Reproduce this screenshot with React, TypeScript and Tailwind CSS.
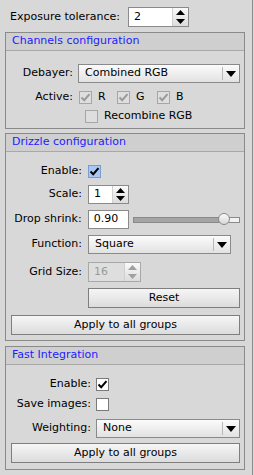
import React from 'react'

type CheckVariant = 'disabledOn' | 'disabledOff' | 'focusOn' | 'on' | 'off'

function CheckBox({ variant }: { variant: CheckVariant }) {
  const box =
    variant === 'disabledOn' || variant === 'disabledOff'
      ? 'bg-[#dedede] border-[#a6a6a6]'
      : variant === 'focusOn'
        ? 'bg-[#a8c8f4] border-[#7a9cd0]'
        : 'bg-white border-[#7a7a7a]'
  const stroke = variant === 'disabledOn' ? '#9a9a9a' : '#000000'
  const checked = variant === 'disabledOn' || variant === 'focusOn' || variant === 'on'
  return (
    <div className={`w-[13px] h-[13px] border shrink-0 flex items-center justify-center ${box}`}>
      {checked && (
        <svg width="11" height="11" viewBox="0 0 11 11">
          <path d="M1.5 5.5 L4.2 8.2 L9.5 2.2" fill="none" stroke={stroke} strokeWidth="2" />
        </svg>
      )}
    </div>
  )
}

function SpinArrows({ disabled }: { disabled?: boolean }) {
  const fill = disabled ? '#a0a0a0' : '#000000'
  return (
    <div className="w-[16px] h-full flex flex-col bg-gradient-to-b from-[#fafafa] to-[#dcdcdc] border-l border-[#d0d0d0]">
      <div className="flex-1 flex items-center justify-center">
        <svg width="9" height="5" viewBox="0 0 9 5">
          <path d="M0 5 L4.5 0 L9 5 Z" fill={fill} />
        </svg>
      </div>
      <div className="flex-1 flex items-center justify-center">
        <svg width="9" height="5" viewBox="0 0 9 5">
          <path d="M0 0 L4.5 5 L9 0 Z" fill={fill} />
        </svg>
      </div>
    </div>
  )
}

function SpinBox({ value, width, height, disabled }: { value: string; width: string; height: string; disabled?: boolean }) {
  return (
    <div
      className={`flex border ${disabled ? 'border-[#a8a8a8] bg-[#dedede] text-[#9a9a9a]' : 'border-[#8a8a8a] bg-white'} ${width} ${height}`}
    >
      <div className="flex-1 flex items-center pl-[5px]">{value}</div>
      <SpinArrows disabled={disabled} />
    </div>
  )
}

function Combo({ value, width }: { value: string; width: string }) {
  return (
    <div className={`flex h-[19px] border border-[#8a8a8a] bg-gradient-to-b from-[#fbfbfb] to-[#e2e2e2] ${width}`}>
      <div className="flex-1 flex items-center pl-[6px]">{value}</div>
      <div className="w-[17px] flex items-center justify-center border-l border-[#b8b8b8] my-[2px]">
        <svg width="10" height="6" viewBox="0 0 10 6">
          <path d="M0 0 L5 6 L10 0 Z" fill="#000" />
        </svg>
      </div>
    </div>
  )
}

function Button({ label, width }: { label: string; width: string }) {
  return (
    <div
      className={`h-[20px] flex items-center justify-center border border-[#7e7e7e] bg-gradient-to-b from-[#f6f6f6] to-[#dcdcdc] ${width}`}
    >
      {label}
    </div>
  )
}

function GroupHeader({ title }: { title: string }) {
  return (
    <div className="h-[18px] bg-[#cfcfcf] border-b border-[#a8a8a8] pl-[6px] flex items-center text-[#1c1cff]">
      {title}
    </div>
  )
}

export default function App() {
  return (
    <div className="w-[254px] h-[475px] bg-[#d8d8d8] font-['DejaVu_Sans',sans-serif] text-[11px] text-black overflow-hidden">
      <div className="w-[253px] h-full border-r border-[#8c8c8c] flex flex-col">
        {/* Exposure tolerance */}
        <div className="flex items-center pl-[10px] mt-[7px] h-[20px]">
          <div className="w-[118px]">Exposure tolerance:</div>
          <SpinBox value="2" width="w-[61px]" height="h-[20px]" />
        </div>

        {/* Channels configuration */}
        <div className="ml-[5px] mt-[5px] w-[240px] border border-[#8a8a8a]">
          <GroupHeader title="Channels configuration" />
          <div className="pt-[13px] pb-[2px]">
            <div className="flex items-center">
              <div className="w-[67px] text-right">Debayer:</div>
              <div className="ml-[5px]">
                <Combo value="Combined RGB" width="w-[162px]" />
              </div>
            </div>
            <div className="flex items-center h-[19px] mt-[5px]">
              <div className="w-[67px] text-right">Active:</div>
              <div className="ml-[6px] flex items-center">
                <div className="w-[38px] flex items-center">
                  <CheckBox variant="disabledOn" />
                  <span className="ml-[6px]">R</span>
                </div>
                <div className="w-[40px] flex items-center">
                  <CheckBox variant="disabledOn" />
                  <span className="ml-[6px]">G</span>
                </div>
                <div className="flex items-center">
                  <CheckBox variant="disabledOn" />
                  <span className="ml-[6px]">B</span>
                </div>
              </div>
            </div>
            <div className="flex items-center h-[19px] pl-[79px]">
              <CheckBox variant="disabledOff" />
              <span className="ml-[6px]">Recombine RGB</span>
            </div>
          </div>
        </div>

        {/* Drizzle configuration */}
        <div className="ml-[5px] mt-[4px] w-[240px] border border-[#8a8a8a]">
          <GroupHeader title="Drizzle configuration" />
          <div className="pt-[9px] pb-[5px] pr-[4px]">
            <div className="flex items-center h-[20px]">
              <div className="w-[76px] text-right">Enable:</div>
              <div className="ml-[6px]">
                <CheckBox variant="focusOn" />
              </div>
            </div>
            <div className="flex items-center mt-[4px]">
              <div className="w-[76px] text-right">Scale:</div>
              <div className="ml-[6px]">
                <SpinBox value="1" width="w-[41px]" height="h-[19px]" />
              </div>
            </div>
            <div className="flex items-center mt-[6px]">
              <div className="w-[76px] text-right">Drop shrink:</div>
              <div className="ml-[6px] w-[41px] h-[19px] border border-[#8a8a8a] bg-white flex items-center pl-[5px]">
                0.90
              </div>
              <div className="ml-[4px] w-[108px] h-[19px] relative flex items-center">
                <div className="w-full h-[6px] border border-[#8a8a8a] flex">
                  <div className="w-[91px] bg-[#a4a4a4]" />
                  <div className="flex-1 bg-[#f2f2f2]" />
                </div>
                <div className="absolute left-[85px] top-[3px] w-[12px] h-[12px] rounded-full border border-[#8a8a8a] bg-gradient-to-b from-[#fafafa] to-[#d8d8d8]" />
              </div>
            </div>
            <div className="flex items-center mt-[6px]">
              <div className="w-[76px] text-right">Function:</div>
              <div className="ml-[6px]">
                <Combo value="Square" width="w-[143px]" />
              </div>
            </div>
            <div className="flex items-center mt-[8px]">
              <div className="w-[76px] text-right">Grid Size:</div>
              <div className="ml-[6px]">
                <SpinBox value="16" width="w-[53px]" height="h-[20px]" disabled />
              </div>
            </div>
            <div className="flex items-center mt-[6px] pl-[82px]">
              <Button label="Reset" width="w-[152px]" />
            </div>
            <div className="mt-[7px] pl-[5px]">
              <Button label="Apply to all groups" width="w-[229px]" />
            </div>
          </div>
        </div>

        {/* Fast Integration */}
        <div className="ml-[5px] mt-[5px] w-[240px] border border-[#8a8a8a]">
          <GroupHeader title="Fast Integration" />
          <div className="pt-[9px] pb-[6px]">
            <div className="flex items-center h-[20px]">
              <div className="w-[85px] text-right">Enable:</div>
              <div className="ml-[5px]">
                <CheckBox variant="on" />
              </div>
            </div>
            <div className="flex items-center h-[20px]">
              <div className="w-[85px] text-right">Save images:</div>
              <div className="ml-[5px]">
                <CheckBox variant="off" />
              </div>
            </div>
            <div className="flex items-center mt-[5px]">
              <div className="w-[85px] text-right">Weighting:</div>
              <div className="ml-[5px]">
                <Combo value="None" width="w-[144px]" />
              </div>
            </div>
            <div className="mt-[5px] pl-[5px]">
              <Button label="Apply to all groups" width="w-[229px]" />
            </div>
          </div>
        </div>
      </div>
    </div>
  )
}
